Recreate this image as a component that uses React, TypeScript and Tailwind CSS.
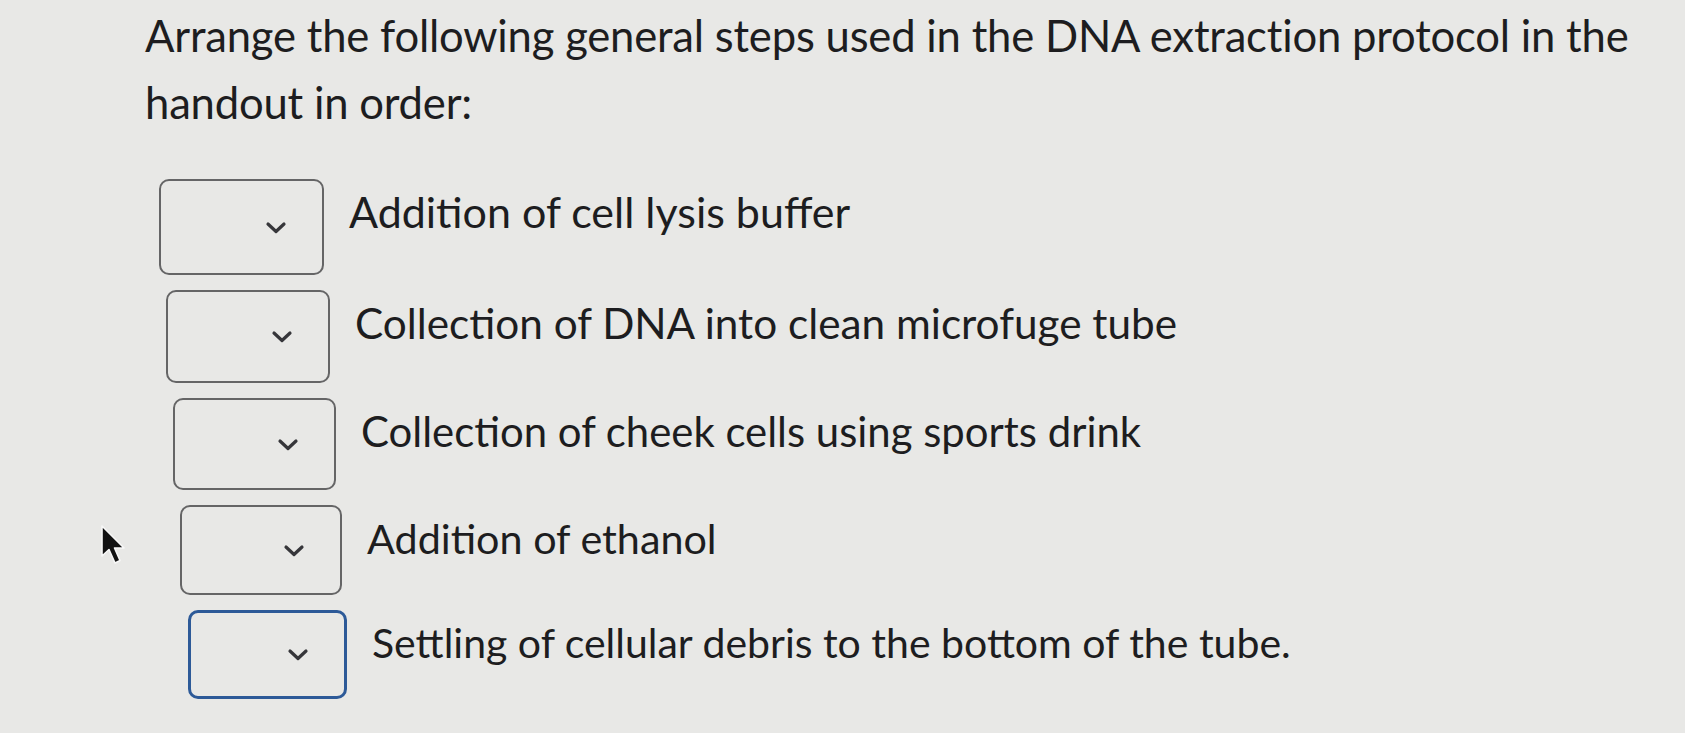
import React from "react";

type Step = {
  label: string;
  rowClass: string;
  boxClass: string;
  textClass: string;
  active?: boolean;
};

const steps: Step[] = [
  {
    label: "Addition of cell lysis buffer",
    rowClass: "ml-[14px]",
    boxClass: "h-[96px] w-[165px]",
    textClass: "text-[43px]",
  },
  {
    label: "Collection of DNA into clean microfuge tube",
    rowClass: "ml-[21px]",
    boxClass: "h-[93px] w-[164px]",
    textClass: "text-[42.3px]",
  },
  {
    label: "Collection of cheek cells using sports drink",
    rowClass: "ml-[28px]",
    boxClass: "h-[92px] w-[163px]",
    textClass: "text-[41.9px]",
  },
  {
    label: "Addition of ethanol",
    rowClass: "ml-[35px]",
    boxClass: "h-[90px] w-[162px]",
    textClass: "text-[41.3px]",
  },
  {
    label: "Settling of cellular debris to the bottom of the tube.",
    rowClass: "ml-[43px]",
    boxClass: "h-[89px] w-[159px]",
    textClass: "text-[41px]",
    active: true,
  },
];

function Chevron() {
  return (
    <svg width="22" height="13" viewBox="0 0 22 13" fill="none">
      <path d="M3 3 L11 10.5 L19 3" stroke="#36363a" strokeWidth="3.2" strokeLinecap="round" strokeLinejoin="round" />
    </svg>
  );
}

function SelectBox({ active, size }: { active?: boolean; size: string }) {
  return (
    <div
      className={`relative flex shrink-0 items-center justify-end rounded-[10px] pr-[35px] ${size} ${
        active ? "border-[3px] border-[#2d5a98]" : "border-2 border-[#656566]"
      }`}
    >
      <Chevron />
    </div>
  );
}

function Cursor() {
  return (
    <svg className="absolute left-[99px] top-[524px]" width="30" height="46" viewBox="0 0 30 46">
      <path
        d="M3 2 L3 32 L10 25.5 L16 39 L21 36.5 L15.5 24 L25 24 Z"
        fill="#121212"
        stroke="#f7f7f7"
        strokeWidth="1.6"
        strokeLinejoin="round"
      />
    </svg>
  );
}

export default function App() {
  return (
    <div
      className="relative h-[733px] w-[1685px] overflow-hidden bg-[#e8e8e6] text-[#1d1d20]"
      style={{ fontFamily: "Lato, 'Open Sans', sans-serif" }}
    >
      <div className="pl-[145px] pt-[2px]">
        <h1 className="text-[43.6px] font-normal leading-[67px] tracking-[-0.2px]">
          Arrange the following general steps used in the DNA extraction protocol in the
          <br />
          handout in order:
        </h1>
        <div className="mt-[43px] flex flex-col gap-[15px]">
          {steps.map((s) => (
            <div key={s.label} className={`flex items-start gap-[25px] ${s.rowClass}`}>
              <SelectBox active={s.active} size={s.boxClass} />
              <div className={`pt-[8px] leading-[50px] ${s.textClass}`}>{s.label}</div>
            </div>
          ))}
        </div>
      </div>
      <Cursor />
    </div>
  );
}
